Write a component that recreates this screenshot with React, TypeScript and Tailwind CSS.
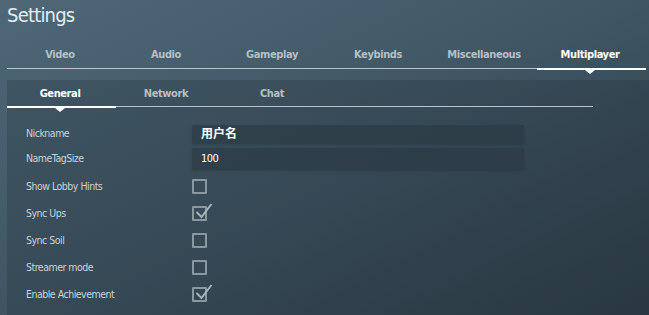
const TOP_TABS = ['Video', 'Audio', 'Gameplay', 'Keybinds', 'Miscellaneous', 'Multiplayer']
const SUB_TABS = ['General', 'Network', 'Chat']

const CHECKS = [
  { label: 'Show Lobby Hints', checked: false },
  { label: 'Sync Ups', checked: true },
  { label: 'Sync Soil', checked: false },
  { label: 'Streamer mode', checked: false },
  { label: 'Enable Achievement', checked: true },
]

const FONT = {
  fontFamily: '"DejaVu Sans Condensed", "DejaVu Sans", "Noto Sans CJK SC", sans-serif',
  fontStretch: 'condensed',
}

function Tab({ label, active }: { label: string; active: boolean }) {
  return (
    <div
      className={`relative flex-1 text-center text-[11px] font-bold leading-[16px] tracking-[-0.4px] ${active ? 'text-white' : 'text-[#b4bfc5]'}`}
    >
      {label}
      {active && (
        <>
          <div className="absolute bottom-[-2px] left-0 right-[-3px] h-[2px] bg-white" />
          <div className="absolute bottom-[-6px] left-1/2 -ml-[5px] h-0 w-0 border-x-[5px] border-t-[4px] border-x-transparent border-t-white" />
        </>
      )}
    </div>
  )
}

function Checkbox({ checked }: { checked: boolean }) {
  return (
    <div className="relative h-[15px] w-[15px] rounded-[1px] border-2 border-[#8a98a0]">
      {checked && (
        <svg className="absolute left-[1px] top-[-7px]" width="18" height="18" viewBox="0 0 18 18">
          <path d="M1.5 11 L6.5 16 L16.5 3" fill="none" stroke="#a7b3b9" strokeWidth="2" />
        </svg>
      )}
    </div>
  )
}

export default function App() {
  return (
    <div
      className="h-[315px] w-[649px] overflow-hidden bg-gradient-to-br from-[#4e6878] via-[#3f5563] to-[#2c3c47]"
      style={FONT}
    >
      <div className="h-[40px] pl-[7px] text-[20px] leading-[30px] tracking-[-0.8px] text-[#e6edf1]">Settings</div>

      {/* Main tabs */}
      <div className="ml-[7px] flex h-[29px] w-[636px] border-b border-[#b9c3c8] pt-[7px]">
        {TOP_TABS.map((t) => (
          <Tab key={t} label={t} active={t === 'Multiplayer'} />
        ))}
      </div>

      {/* Panel */}
      <div className="ml-[7px] mt-[11px] h-[235px] bg-[#1e2a33]/25">
        <div className="flex h-[27px] w-[586px] border-b border-[#b9c3c8] pt-[6px]">
          {SUB_TABS.map((t) => (
            <div key={t} className="flex w-[106px]">
              <Tab label={t} active={t === 'General'} />
            </div>
          ))}
        </div>

        <div className="flex flex-col pl-[19px] pt-[16px] text-[10.5px] tracking-[-0.5px] text-[#c9d2d7]">
          <div className="flex h-[22px] items-center">
            <div className="w-[166px]">Nickname</div>
            <div className="flex h-[19px] w-[332px] items-center rounded-[2px] bg-[#2c3b45]/70 pl-[9px] text-[12px] font-bold tracking-normal text-white shadow-sm">
              用户名
            </div>
          </div>
          <div className="mt-[3px] flex h-[22px] items-center">
            <div className="w-[166px]">NameTagSize</div>
            <div className="flex h-[22px] w-[332px] items-center rounded-[2px] bg-[#2c3b45]/70 pl-[9px] text-[11px] text-white shadow-sm">
              100
            </div>
          </div>
          <div className="mt-[3px] flex flex-col">
            {CHECKS.map((c) => (
              <div key={c.label} className="flex h-[27px] items-center">
                <div className="w-[166px]">{c.label}</div>
                <Checkbox checked={c.checked} />
              </div>
            ))}
          </div>
        </div>
      </div>
    </div>
  )
}
